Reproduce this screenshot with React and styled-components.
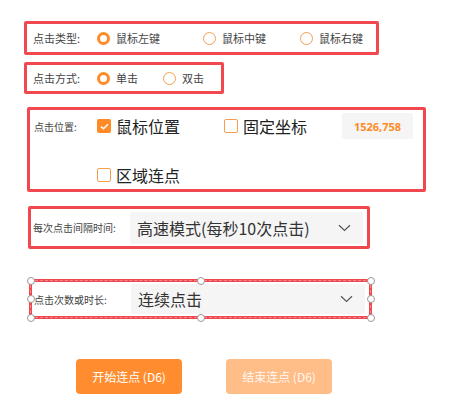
import React from 'react'
import styled, { createGlobalStyle } from 'styled-components'

const GlobalStyle = createGlobalStyle`
  body {
    margin: 0;
    background: #fff;
    font-family: "Noto Sans CJK SC", "Noto Sans", sans-serif;
    color: #333;
  }
`

const ORANGE = '#ff8a26'
const LIGHT_ORANGE = '#f59e50'
const RED = '#f1474f'

const Page = styled.div`
  width: 450px;
  height: 411px;
  padding-top: 21px;
  box-sizing: border-box;
  display: flex;
  flex-direction: column;
`

const Frame = styled.div`
  position: relative;
  box-sizing: border-box;
  margin-left: ${p => p.$left}px;
  margin-top: ${p => p.$top || 0}px;
  width: ${p => p.$width}px;
  height: ${p => p.$height}px;
  border: 3px solid ${RED};
  border-radius: 2px;
`

const DashedFrame = styled(Frame)`
  &::before {
    content: '';
    position: absolute;
    inset: -2px;
    border: 1px dashed rgba(255, 255, 255, 0.35);
    pointer-events: none;
  }
`

const Handle = styled.span`
  position: absolute;
  width: 8px;
  height: 8px;
  border-radius: 50%;
  background: #fff;
  border: 1px solid #999;
  box-sizing: border-box;
  transform: translate(-50%, -50%);
`

const ChoiceRow = styled.div`
  height: 100%;
  display: grid;
  grid-template-columns: ${p => p.$cols};
  align-items: center;
  padding-left: 6px;
`

const Label = styled.span`
  font-size: ${p => p.$size || 11}px;
  color: #444;
  white-space: nowrap;
`

const Option = styled.label`
  display: flex;
  align-items: center;
  gap: 6px;
  font-size: 11px;
  color: #444;
  white-space: nowrap;
`

const Radio = styled.span`
  width: 13px;
  height: 13px;
  box-sizing: border-box;
  border-radius: 50%;
  border: ${p => (p.$on ? `3.5px solid ${ORANGE}` : `1.2px solid ${LIGHT_ORANGE}`)};
  background: #fff;
  flex: none;
`

const PosGrid = styled.div`
  display: grid;
  grid-template-columns: 63px 127px 118px 71px;
  grid-template-rows: 26px 24px;
  row-gap: 24px;
  align-items: center;
  padding: 3px 0 0 4px;
`

const Check = styled.label`
  display: flex;
  align-items: center;
  gap: 5px;
  font-size: 16px;
  color: #222;
  white-space: nowrap;
`

const Box = styled.span`
  width: 14px;
  height: 14px;
  box-sizing: border-box;
  border-radius: 2px;
  flex: none;
  display: flex;
  align-items: center;
  justify-content: center;
  background: ${p => (p.$on ? ORANGE : '#fff')};
  border: ${p => (p.$on ? 'none' : `1.5px solid ${LIGHT_ORANGE}`)};
`

const Coord = styled.div`
  height: 26px;
  background: #f5f5f5;
  border-radius: 2px;
  display: flex;
  align-items: center;
  justify-content: center;
  font-size: 11px;
  font-weight: 700;
  color: ${ORANGE};
  font-family: "Noto Sans", sans-serif;
`

const SelectRow = styled.div`
  height: 100%;
  display: flex;
  align-items: center;
  justify-content: space-between;
  padding-left: ${p => p.$pad}px;
  padding-right: 4px;
`

const Select = styled.div`
  width: ${p => p.$width}px;
  height: ${p => p.$height}px;
  background: #f5f5f5;
  border-radius: 2px;
  display: flex;
  align-items: center;
  justify-content: space-between;
  padding: 0 12px 0 7px;
  box-sizing: border-box;
  font-size: 16px;
  color: #333;
  white-space: nowrap;
`

const Buttons = styled.div`
  display: flex;
  gap: 44px;
  margin: 40px 0 0 76px;
`

const Button = styled.button`
  width: 106px;
  height: 35px;
  border: none;
  border-radius: 4px;
  background: ${p => (p.$muted ? '#ffbd87' : '#ff8d2f')};
  color: ${p => (p.$muted ? 'rgba(255,255,255,0.9)' : '#fff')};
  font-family: "Noto Sans CJK SC", "Noto Sans", sans-serif;
  font-size: 12px;
  padding: 0;
`

const Chevron = () => (
  <svg width="13" height="8" viewBox="0 0 13 8">
    <path d="M1 1.2 L6.5 6.5 L12 1.2" fill="none" stroke="#555" strokeWidth="1.2" />
  </svg>
)

const Tick = () => (
  <svg width="9" height="7" viewBox="0 0 9 7">
    <path d="M1 3.6 L3.4 5.8 L8 1.2" fill="none" stroke="#fff" strokeWidth="1.5" />
  </svg>
)

// selection handles round the last frame, in % of its box
const handles = [
  [0, 0], [50, 0], [100, 0],
  [0, 50], [100, 50],
  [0, 100], [50, 100], [100, 100],
]

const edge = v => (v === 0 ? -1.5 : v === 100 ? 1.5 : 0)

export default function App() {
  return (
    <Page>
      <GlobalStyle />

      <Frame $left={24} $width={355} $height={34}>
        <ChoiceRow $cols="64px 106px 97px auto">
          <Label>点击类型:</Label>
          <Option><Radio $on />鼠标左键</Option>
          <Option><Radio />鼠标中键</Option>
          <Option><Radio />鼠标右键</Option>
        </ChoiceRow>
      </Frame>

      <Frame $left={24} $top={7} $width={200} $height={32}>
        <ChoiceRow $cols="64px 66px auto">
          <Label>点击方式:</Label>
          <Option><Radio $on />单击</Option>
          <Option><Radio />双击</Option>
        </ChoiceRow>
      </Frame>

      <Frame $left={27} $top={13} $width={399} $height={85}>
        <PosGrid>
          <Label $size={10}>点击位置:</Label>
          <Check><Box $on><Tick /></Box>鼠标位置</Check>
          <Check><Box />固定坐标</Check>
          <Coord>1526,758</Coord>
          <span />
          <Check><Box />区域连点</Check>
        </PosGrid>
      </Frame>

      <Frame $left={28} $top={14} $width={342} $height={43}>
        <SelectRow $pad={2}>
          <Label $size={10}>每次点击间隔时间:</Label>
          <Select $width={233} $height={32}>
            高速模式(每秒10次点击)
            <Chevron />
          </Select>
        </SelectRow>
      </Frame>

      <DashedFrame $left={29} $top={30} $width={343} $height={40}>
        <SelectRow $pad={2}>
          <Label $size={10}>点击次数或时长:</Label>
          <Select $width={234} $height={30}>
            连续点击
            <Chevron />
          </Select>
        </SelectRow>
        {handles.map(([x, y], i) => (
          <Handle
            key={i}
            style={{ left: `calc(${x}% + ${edge(x)}px)`, top: `calc(${y}% + ${edge(y)}px)` }}
          />
        ))}
      </DashedFrame>

      <Buttons>
        <Button>开始连点 (D6)</Button>
        <Button $muted>结束连点 (D6)</Button>
      </Buttons>
    </Page>
  )
}
